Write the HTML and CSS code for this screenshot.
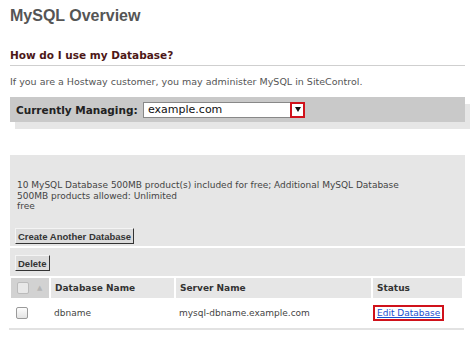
FILE: index.html
```html
<!DOCTYPE html>
<html lang="en">
<head>
    <meta charset="UTF-8">
    <title>MySQL Overview</title>
    <link rel="stylesheet" href="styles.css">
</head>
<body>
    <div class="page">
        <h1 class="page-title">MySQL Overview</h1>
        <h2 class="section-title">How do I use my Database?</h2>
        <p class="intro">If you are a Hostway customer, you may administer MySQL in SiteControl.</p>

        <div class="managing-bar">
            <span class="managing-label">Currently Managing:</span>
            <div class="fake-select">
                <span class="fake-select-value">example.com</span>
            </div>
            <span class="select-arrow"><span class="arrow-down"></span></span>
        </div>

        <div class="info-box">
            <p class="info-text">10 MySQL Database 500MB product(s) included for free; Additional MySQL Database<br>500MB products allowed: Unlimited<br>free</p>
            <button class="btn">Create Another Database</button>
        </div>
        <div class="toolbar">
            <button class="btn">Delete</button>
        </div>

        <table class="db-table">
            <thead>
                <tr>
                    <th class="col-check"><span class="checkbox light"></span><span class="sort-arrow">&#9650;</span></th>
                    <th class="col-name">Database Name</th>
                    <th class="col-server">Server Name</th>
                    <th class="col-status">Status</th>
                </tr>
            </thead>
            <tbody>
                <tr>
                    <td class="col-check"><span class="checkbox"></span></td>
                    <td>dbname</td>
                    <td>mysql-dbname.example.com</td>
                    <td><a class="edit-link" href="#">Edit Database</a></td>
                </tr>
            </tbody>
        </table>
    </div>
</body>
</html>
```

FILE: styles.css
```css
body, html {
    margin: 0;
    padding: 0;
    background: #fff;
}
.page {
    width: 455px;
    padding-left: 10px;
    font-family: 'DejaVu Sans', Verdana, sans-serif;
    color: #444;
}
.page-title {
    margin: 0;
    padding-top: 7px;
    font-family: 'Liberation Sans', Arial, sans-serif;
    font-size: 16px;
    line-height: 18px;
    font-weight: bold;
    color: #555;
}
.section-title {
    margin: 24px 0 0 0;
    padding-bottom: 4px;
    font-size: 10.5px;
    line-height: 12px;
    font-weight: bold;
    color: #4d1717;
    border-bottom: 1px solid #cfcfcf;
}
.intro {
    margin: 10px 0 0 0;
    font-size: 9.5px;
    line-height: 11px;
    color: #555;
}
.managing-bar {
    margin-top: 10px;
    height: 25px;
    background: #c9c9c9;
    box-shadow: 5px 7px 0 #e6e6e6;
    display: flex;
    align-items: center;
    padding-left: 6px;
}
.managing-label {
    font-size: 10.5px;
    font-weight: bold;
    color: #222;
    width: 127px;
    flex-shrink: 0;
    white-space: nowrap;
}
.fake-select {
    width: 142px;
    height: 14px;
    background: #fff;
    border: 1px solid #888;
    border-right: none;
    display: flex;
    align-items: center;
    padding-left: 4px;
    box-sizing: content-box;
}
.fake-select-value {
    font-size: 11px;
    color: #111;
}
.select-arrow {
    width: 11px;
    height: 12px;
    border: 2px solid #d0121b;
    background: #fff;
    display: flex;
    align-items: center;
    justify-content: center;
}
.arrow-down {
    width: 0;
    height: 0;
    border-left: 3px solid transparent;
    border-right: 3px solid transparent;
    border-top: 5px solid #111;
}
.info-box {
    margin-top: 33px;
    background: #e6e6e6;
    padding: 25px 5px 2px 5px;
}
.info-text {
    margin: 0 0 0 2px;
    font-size: 9px;
    line-height: 10.5px;
    color: #444;
}
.btn {
    font-family: 'Liberation Sans', Arial, sans-serif;
    font-size: 9.5px;
    font-weight: bold;
    color: #333;
    background: #dcdcdc;
    border: 1px solid;
    border-color: #f4f4f4 #333 #333 #f4f4f4;
    padding: 2px 2px 1px 2px;
    line-height: 11px;
    margin: 0;
}
.info-box .btn {
    margin-top: 16px;
}
.toolbar {
    margin-top: 2px;
    background: #e6e6e6;
    padding: 4px 5px 5px 5px;
}
.db-table {
    margin-top: 2px;
    width: 455px;
    border-collapse: separate;
    border-spacing: 2px 0;
    margin-left: -1px;
    font-size: 9px;
    border-bottom: 2px solid #e2e2e2;
}
.db-table th {
    background: #e6e6e6;
    text-align: left;
    font-weight: bold;
    color: #333;
    height: 20px;
    padding: 0 4px;
}
.db-table th.col-check {
    background: #d2d2d2;
}
.db-table td {
    height: 30px;
    padding: 0 3px;
    color: #444;
}
.col-check {
    width: 30px;
    white-space: nowrap;
}
.col-name {
    width: 115px;
}
.col-server {
    width: 187px;
}
.checkbox {
    display: inline-block;
    width: 10px;
    height: 10px;
    border: 1px solid #9a9a9a;
    border-radius: 2px;
    background: linear-gradient(#fdfdfd, #e4e4e4);
    vertical-align: middle;
    margin-left: 2px;
}
.checkbox.light {
    border-color: #bbb;
    background: #e8e8e8;
}
.sort-arrow {
    font-size: 7px;
    color: #b5b5b5;
    margin-left: 8px;
    vertical-align: middle;
}
.edit-link {
    color: #1a4fd0;
    text-decoration: underline;
    border: 2px solid #d0121b;
    padding: 1px 2px;
    margin-left: -3px;
}
```
